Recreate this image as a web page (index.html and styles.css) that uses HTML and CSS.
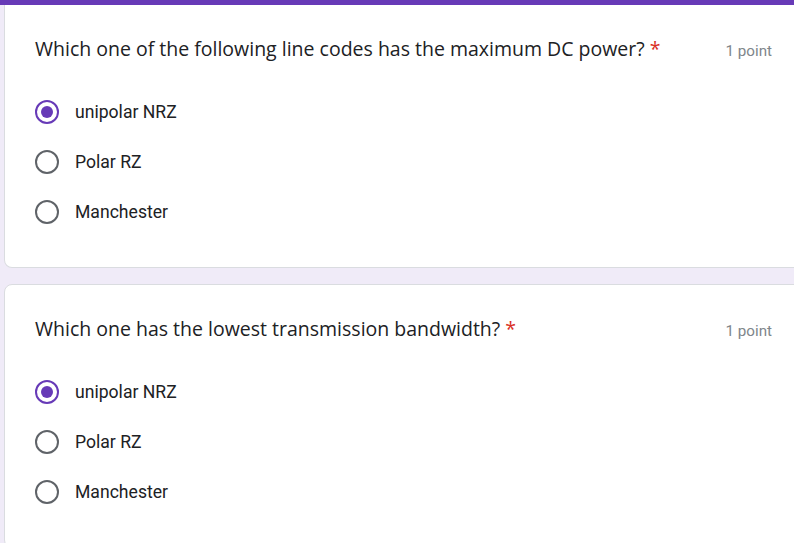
FILE: index.html
```html
<!DOCTYPE html>
<html lang="en">
<head>
    <meta charset="UTF-8">
    <title>Quiz</title>
    <link rel="stylesheet" href="styles.css">
</head>
<body>
    <div class="top-bar"></div>

    <section class="question first">
        <div class="question-head">
            <h2>Which one of the following line codes has the maximum DC power? <span class="required">*</span></h2>
            <span class="points">1 point</span>
        </div>
        <ul class="options">
            <li><span class="radio checked"></span>unipolar NRZ</li>
            <li><span class="radio"></span>Polar RZ</li>
            <li><span class="radio"></span>Manchester</li>
        </ul>
    </section>

    <section class="question">
        <div class="question-head">
            <h2>Which one has the lowest transmission bandwidth? <span class="required">*</span></h2>
            <span class="points">1 point</span>
        </div>
        <ul class="options">
            <li><span class="radio checked"></span>unipolar NRZ</li>
            <li><span class="radio"></span>Polar RZ</li>
            <li><span class="radio"></span>Manchester</li>
        </ul>
    </section>
</body>
</html>
```

FILE: styles.css
```css
body {
    margin: 0;
    padding: 0;
    background-color: #f0ebf8;
    color: #202124;
    font-family: 'Roboto', 'Liberation Sans', sans-serif;
    overflow: hidden;
}

.top-bar {
    height: 5px;
    background-color: #673ab7;
}

.question {
    background-color: white;
    margin-left: 4px;
    width: 737px;
    padding: 32px 30px 30px 30px;
    border: 1px solid #dadce0;
    border-radius: 8px;
    margin-bottom: 16px;
}

.question.first {
    border-top: none;
    border-radius: 0 0 8px 8px;
    padding-top: 32px;
}

.question-head {
    display: flex;
    justify-content: space-between;
    align-items: baseline;
}

.question-head h2 {
    margin: 0;
    font-family: 'Open Sans', 'Liberation Sans', sans-serif;
    font-weight: 400;
    font-size: 19.5px;
    line-height: 24px;
}

.required {
    color: #d93025;
}

.points {
    font-size: 15.2px;
    color: #80868b;
}

.options {
    list-style: none;
    margin: 26px 0 0 0;
    padding: 0;
}

.options li {
    display: flex;
    align-items: center;
    gap: 16px;
    height: 50px;
    font-size: 17.6px;
}

.radio {
    box-sizing: border-box;
    width: 24px;
    height: 24px;
    border: 2px solid #5f6368;
    border-radius: 50%;
    display: flex;
    align-items: center;
    justify-content: center;
}

.radio.checked {
    border-color: #673ab7;
}

.radio.checked::after {
    content: '';
    width: 12px;
    height: 12px;
    border-radius: 50%;
    background-color: #673ab7;
}
```
